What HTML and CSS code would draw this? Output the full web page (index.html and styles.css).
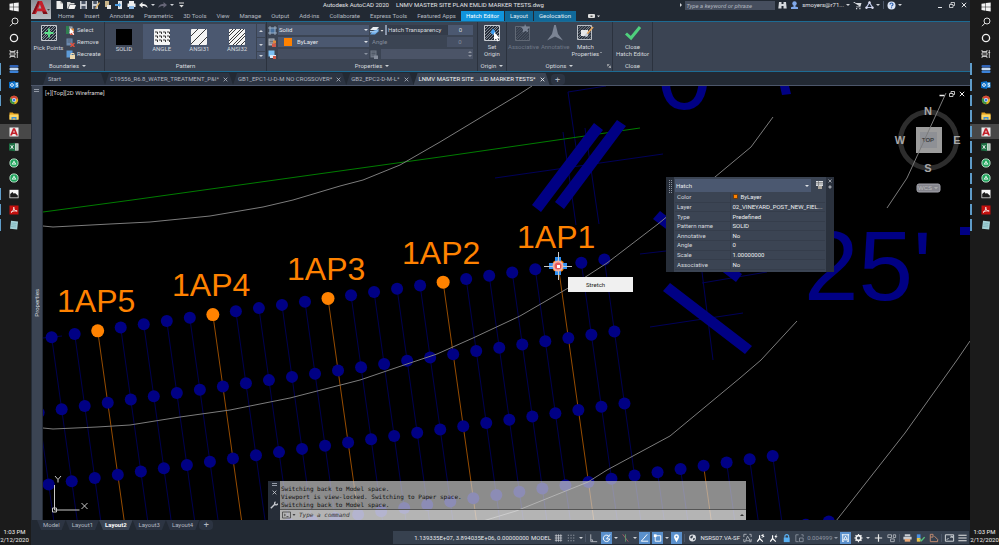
FILE: index.html
```
<!DOCTYPE html>
<html lang="en">
<head>
<meta charset="utf-8">
<title>Autodesk AutoCAD 2020 - LNMV MASTER SITE PLAN EMLID MARKER TESTS.dwg</title>
<link rel="stylesheet" href="styles.css">
</head>
<body>
<svg class="sprite" aria-hidden="true">
  <symbol id="t-win" viewBox="0 0 10 10"><path fill="#f2f2f2" d="M.5 1.8 4.4 1.2v3.5H.5zM4.9 1.1 9.7.4v4.3H4.9zM.5 5.2h3.9v3.5L.5 8.1zM4.9 5.2h4.8v4.3l-4.8-.7z"/></symbol>
  <symbol id="t-search" viewBox="0 0 10 10"><g fill="none" stroke="#e0e0e0"><circle cx="6" cy="4" r="3"/><path d="M3.9 6.2 1 9.2"/></g></symbol>
  <symbol id="t-cortana" viewBox="0 0 10 10"><circle cx="5" cy="5" r="3.6" fill="none" stroke="#f0f0f0" stroke-width="1.3"/></symbol>
  <symbol id="t-tasks" viewBox="0 0 10 10"><path fill="none" stroke="#d8d8d8" stroke-width=".9" d="M1 1v1.5h5V1M1 9V7.5h5V9M1 3.8h5v2.4H1zM8.3 1v8M7.4 3.5h1.8"/></symbol>
  <symbol id="t-stack" viewBox="0 0 10 10"><rect x=".5" y="1" width="9" height="2.4" rx="1" fill="#2f62b5"/><rect x=".5" y="3.8" width="9" height="2.4" rx="1" fill="#c9dcf2"/><rect x=".5" y="6.6" width="9" height="2.4" rx="1" fill="#3b82d8"/></symbol>
  <symbol id="t-outlook" viewBox="0 0 10 10"><path fill="#0a6cc4" d="M0 2 6 1v8L0 8z"/><path fill="#2a90e0" d="M5.5 2.2h4v5.6h-4z"/><circle cx="3" cy="5" r="1.4" fill="none" stroke="#fff" stroke-width=".9"/><path d="M9 3.4H7.2v1.4h1.4v1.5H6.8" fill="none" stroke="#fff" stroke-width=".8"/></symbol>
  <symbol id="t-chrome" viewBox="0 0 10 10"><circle cx="5" cy="5" r="4.2" fill="#e0b021"/><path fill="#d8473a" d="M5 5 1.3 3A4.2 4.2 0 0 1 9 3.7z"/><path fill="#35964a" d="M5 5 5.5 9.1A4.2 4.2 0 0 1 1.3 3z"/><circle cx="5" cy="5" r="2" fill="#fff"/><circle cx="5" cy="5" r="1.5" fill="#3f7de0"/></symbol>
  <symbol id="t-folder" viewBox="0 0 10 10"><path fill="#e8a51f" d="M.5 1.5h3.3l1 1h4.7v6h-9z"/><path fill="#fbd768" d="M.5 3.6h9v5h-9z"/><path fill="#3f8fd6" d="M2.5 6h5v2.9H6.3V7.4H3.7v1.5H2.5z"/></symbol>
  <symbol id="t-acad" viewBox="0 0 10 10"><path fill="#ececec" d="M.5.5h9v9h-9z"/><path fill="#c2202a" d="M4 1.2h2L9 8.6H7L6.4 7H3.6L3 8.6H1zM5 3.2 4.1 5.6h1.8z"/></symbol>
  <symbol id="t-excel" viewBox="0 0 10 10"><path fill="#e8efe9" d="M5 1.4h4.5v7.2H5z"/><path fill="#1e7044" d="M0 1.6 6 .8v8.4l-6-.8z"/><path stroke="#fff" stroke-width=".9" d="m1.7 3.2 2.6 3.6M4.3 3.2 1.7 6.8"/><path stroke="#1e7044" stroke-width=".7" d="M6.5 3h2.3M6.5 5h2.3M6.5 7h2.3"/></symbol>
  <symbol id="t-green" viewBox="0 0 10 10"><circle cx="5" cy="5" r="4.1" fill="#1fa45c" stroke="#c7ecd6" stroke-width=".9"/><path fill="#fff" d="M5 2.4 7.4 6.6H2.6z"/><path fill="#1fa45c" d="M5 4.1 5.9 5.8H4.1z"/></symbol>
  <symbol id="t-photo" viewBox="0 0 10 10"><path fill="#f4f4f4" d="M.5.8h9v8.4h-9z"/><path fill="#1a1a1a" d="M1.2 8.4V5L3.4 3l1.4 1.7L6 3.9l2.8 2.6v1.9z"/></symbol>
  <symbol id="t-pdf" viewBox="0 0 10 10"><path fill="#c4100e" d="M.5.5h9v9h-9z"/><path fill="none" stroke="#fff" stroke-width=".8" d="M2 7.4C4 6.4 5 4 4.8 2.2 4.700 4.800 6 6 8.200 6 6 5.600 3.600 6 2 7.400"/></symbol>
  <symbol id="t-note" viewBox="0 0 10 10"><path fill="#a8d4da" d="m2 .8 7 .6-.8 8L1 8.700z"/><path stroke="#5c9aa3" stroke-width=".5" d="m2.500 3 5 .4M2.300 4.800l5 .4M2.100 6.600l5 .4"/></symbol>
  <symbol id="hatch" viewBox="0 0 16 16"><path fill="#252c37" stroke="#c8ccd2" d="M.5.5h15v15H.5z"/><path fill="none" stroke="#9aa3b0" stroke-width=".8" d="M1 4 4 1M1 7l6-6M1 10l9-9M1 13l12-12M1 15 15 1M4 15 15 4M7 15l8-8M10 15l5-5M13 15l2-2"/></symbol>
  <symbol id="layer" viewBox="0 0 9 9"><path fill="#aeb5bf" d="M.5.5h6v7h-6z"/><path stroke="#3b4453" stroke-width=".6" d="M1.500 2h4M1.500 3.500h4M1.500 5h4"/><path fill="#e08a3c" d="M5 2.500h3v3H5z"/><path fill="#cf5a4a" d="M4 5.500h4V9H4z"/></symbol>
  <symbol id="x" viewBox="0 0 6 6"><path stroke="currentColor" d="m.8.8 4.400 4.400M5.200.8.8 5.200"/></symbol>
  <symbol id="restore" viewBox="0 0 6 6"><path fill="none" stroke="currentColor" stroke-width=".8" d="M.5 2.500h3.500v3H.5zM2 2.300V.5h3.500v3H4.200"/></symbol>
</svg>

<nav class="taskbar" aria-label="Left taskbar">
  <ul class="tasks"></ul>
  <p class="clock">1:03 PM<br>2/12/2020</p>
</nav>

<div class="app">
  <header class="top">
    <button class="logo" aria-label="Application menu"><svg viewBox="0 0 20 18"><path fill="#c51f2b" d="M7 0h4l5.500 13h-4.200l-1-2.800H6.200L5 13H1zM8.900 3.200 7.200 7.600h3.200z"/><path fill="#7d0f18" d="M7 0 1 13h2.500L8.500 1zM11.300 10.200l1 2.800h4.200l-1-2.300z"/><path d="M16 8h3l-1.500 1.700z" fill="#444"/></svg></button>
    <div class="heads">
      <div class="title-row">
        <div class="qat">
          <svg viewBox="0 0 9 9"><path fill="#eee" d="M1.500 0h4l2.500 2.500V8h-6.500z"/><path fill="#999" d="M5.500 0v2.500H8z"/></svg>
          <svg viewBox="0 0 9 9"><path fill="#d9d9d9" d="M0 1h3l1 1h3.500v1.500H2.500L1 7.500H0z"/><path fill="#f4f4f4" d="M2.700 4H9L7.500 8H1.300z"/></svg>
          <svg viewBox="0 0 9 9"><path fill="#c8ccd2" d="M1 0h7v8H1z"/><path fill="#4b5566" d="M2.500 0h4v3h-4zM2.500 5h4v3h-4z"/></svg>
          <svg viewBox="0 0 9 9"><path fill="#c8ccd2" d="M1 0h6v8H1z"/><path fill="#4b5566" d="M2.300 0h3.500v3H2.300zM2.300 5h3v3h-3z"/><path stroke="#e0b060" stroke-width="1.300" d="M8.500 1.500 4.500 7.500"/></svg>
          <svg viewBox="0 0 9 9"><path fill="#c8b489" d="M2 0h4v6H2z"/><path fill="#e8e8e8" d="M4 4h4v4H4z"/></svg>
          <svg viewBox="0 0 9 9"><path fill="#dfe3e8" d="M3 0h4v8H3z"/><path fill="#4b9be0" d="M0 3h4V1.500L6 4 4 6.500V5H0z"/></svg>
          <svg viewBox="0 0 9 9"><path fill="#eee" d="M2 0h5v2.500H2zM.5 2.500h8V6h-8z"/><path fill="#8dbbe8" d="M2 5h5v3H2z"/></svg>
          <svg viewBox="0 0 9 9"><path fill="#eee" d="M0 4 3.500 1v2C6.500 3 8.500 4 8.500 7 7.500 5.500 6 5 3.500 5v2z"/></svg>
          <i class="caret"></i>
          <svg viewBox="0 0 9 9"><path fill="#667" d="M9 4 5.500 1v2C2.500 3 .5 4 .5 7 1.500 5.500 3 5 5.500 5v2z"/></svg>
          <i class="caret"></i>
          <svg viewBox="0 0 9 9"><path fill="#ddd" d="M2 1.500h5v1H2zM2.200 4h4.600L4.500 6.500z"/></svg>
        </div>
        <h1 class="title"><span>Autodesk AutoCAD 2020</span><span>LNMV MASTER SITE PLAN EMLID MARKER TESTS.dwg</span></h1>
        <div class="account">
          <i class="caret right"></i>
          <input class="search" type="search" placeholder="Type a keyword or phrase" aria-label="Type a keyword or phrase">
          <svg viewBox="0 0 9 9"><path fill="#d5d8dd" d="M1 1h2.500v2h2V1H8l.7 6.500H5.500V5h-2v2.500H.3z"/></svg>
          <svg viewBox="0 0 9 9"><circle cx="4.500" cy="2.500" r="2.200" fill="#7fa8ea"/><path fill="#7fa8ea" d="M3.700 4h1.600v1.500L8 6.200V8H1V6.200l2.700-.7z"/></svg>
          <button class="user">smoyers@r71...</button><i class="caret"></i>
          <svg class="cart" viewBox="0 0 9 9"><path fill="#d5d8dd" d="M0 1h2l.5 1H8.500L7.500 5.500H3.200v.7H8M3 7h1.200v1.200H3zM6.300 7h1.200v1.200H6.300z"/></svg>
          <svg viewBox="0 0 9 9"><path fill="none" stroke="#b9c4e6" stroke-width="1.200" d="M4.500 1.500 7.500 6.500h-6z"/><circle cx="4.500" cy="1.500" r="1.200" fill="#dde"/><circle cx="1.500" cy="6.800" r="1.200" fill="#dde"/><circle cx="7.500" cy="6.800" r="1.200" fill="#dde"/></svg>
          <i class="caret"></i><i class="bar"></i>
          <svg viewBox="0 0 9 9"><circle cx="4.500" cy="4.500" r="4" fill="#dce6f6"/><path fill="none" stroke="#2c5fb0" stroke-width="1.200" d="M3 3.500c0-2 3-2 3 0 0 1-1.500 1-1.500 2M4.500 6.300v1"/></svg>
          <i class="caret"></i>
        </div>
        <div class="winctl">
          <button aria-label="Minimize"><svg viewBox="0 0 6 6"><path stroke="currentColor" d="M1 5.500h4"/></svg></button>
          <button aria-label="Restore"><svg><use href="#restore"/></svg></button>
          <button aria-label="Close"><svg><use href="#x"/></svg></button>
        </div>
      </div>
      <nav class="tabs">
        <a href="#">Home</a><a href="#">Insert</a><a href="#">Annotate</a><a href="#">Parametric</a><a href="#">3D Tools</a><a href="#">View</a><a href="#">Manage</a><a href="#">Output</a><a href="#">Add-ins</a><a href="#">Collaborate</a><a href="#">Express Tools</a><a href="#">Featured Apps</a><a class="ctx on" href="#">Hatch Editor</a><a class="ctx" href="#">Layout</a><a class="ctx" href="#">Geolocation</a>
        <svg viewBox="0 0 12 6"><rect y="1" width="7" height="4" rx="1" fill="#ddd"/><path fill="#555" d="M2.500 2.500h2v1.500h-2z"/><path fill="#ddd" d="M9 2.500h3L10.500 4.200z"/></svg>
      </nav>
    </div>
  </header>

  <section class="ribbon" aria-label="Hatch Editor">
    <div class="panel p-bound">
      <div class="body">
        <button class="big"><svg viewBox="0 0 18 18"><use href="#hatch" x="1" y="1" width="16" height="16"/><path stroke="#5de08a" stroke-width="1.800" d="M9 4.500v9M4.500 9h9"/></svg>Pick Points</button>
        <div class="stack">
          <button><svg viewBox="0 0 9 9"><use href="#layer" width="9" height="9"/><path fill="#2f7f50" d="M0 0h3v8H0z"/><path fill="#fff" d="M4 2v6l1.500-1.300L7.500 9l.8-.8L6.500 6H8z"/></svg>Select</button>
          <button><svg viewBox="0 0 9 9"><path fill="#6d8bb0" d="M.5.5h6v7h-6z"/><path stroke="#3b4453" stroke-width=".6" d="M1.500 2h4M1.500 4h4"/><path stroke="#e0503c" stroke-width="1.400" d="m4.500 5 4 4M8.500 5l-4 4"/></svg>Remove</button>
          <button><svg viewBox="0 0 9 9"><path fill="#5d9bd8" d="M.5.500h6v7h-6z"/><path fill="#ecd9ae" d="M4 5h5v4H4z"/><path fill="none" stroke="#ecd9ae" d="M5 5V3.500h3V5"/></svg>Recreate</button>
        </div>
      </div>
      <h2>Boundaries<i class="caret"></i></h2>
    </div>
    <div class="panel p-pattern">
      <div class="body gallery">
        <button class="on"><svg viewBox="0 0 16 16"><path d="M0 0h16v16H0z"/></svg>SOLID</button>
        <button><svg viewBox="0 0 16 16"><rect width="16" height="16" rx="1" fill="#f4f4f4"/><path fill="none" stroke="#222" stroke-width=".9" d="M1 3h2.500v2M5 3h2.500v2M9 3h2.500v2M13 3h2.500v2M1 7h2.500v2M5 7h2.500v2M9 7h2.500v2M13 7h2.500v2M1 11h2.500v2M5 11h2.500v2M9 11h2.500v2M13 11h2.500v2"/></svg>ANGLE</button>
        <button><svg viewBox="0 0 16 16"><rect width="16" height="16" rx="1" fill="#f4f4f4"/><path stroke="#222" stroke-width=".9" d="M0 7 7 0M0 15 15 0M8 16l8-8"/></svg>ANSI31</button>
        <button><svg viewBox="0 0 16 16"><rect width="16" height="16" rx="1" fill="#f4f4f4"/><path stroke="#222" stroke-width=".9" d="M0 4 4 0M0 7 7 0M0 12 12 0M0 15 15 0M4 16 16 4M7 16l9-9M12 16l4-4"/></svg>ANSI32</button>
        <div class="scroller"><button aria-label="Up"><i class="caret up"></i></button><button aria-label="Down"><i class="caret"></i></button><button aria-label="More"><i class="caret"></i></button></div>
      </div>
      <h2>Pattern</h2>
    </div>
    <div class="panel p-props">
      <div class="body props">
        <svg viewBox="0 0 9 9"><path fill="#48709c" d="M1.500 1.500h6v6h-6z"/><path fill="none" stroke="#a9bacd" stroke-width=".8" d="M0 2h9M0 7h9M2 0v9M7 0v9"/></svg>
        <label class="sel"><select aria-label="Hatch type"><option>Solid</option></select></label>
        <svg class="wide" viewBox="0 0 14 9"><path fill="#6aaae8" d="m3 5 4-2 2 2-4 3.500H0z"/><path fill="#e8edf2" d="m3 1 6 0-2.500 3H0z"/><path fill="#9fc7ec" d="M0 5h6l2.500-2.500V4L6 6.500H0z"/><path fill="#ddd" d="M10.500 4h3L12 5.700z"/></svg>
        <div class="field lit"><label for="transp">Hatch Transparency</label><input id="transp" value="0"></div>
        <svg><use href="#layer"/></svg>
        <label class="sel sw"><select aria-label="Hatch color"><option>ByLayer</option></select></label>
        <div class="field angle"><label for="angle">Angle</label><input id="angle" value="0" disabled></div>
        <svg viewBox="0 0 9 9"><path fill="#7cc0f4" d="M.5.500h6v6h-6z"/><path fill="#d8e8f8" d="M2 5h6v3H2z"/><path fill="#cf5a4a" d="M5 6h3v3H5z"/></svg>
        <label class="sel off"><select aria-label="Background color" disabled><option></option></select></label>
        <svg viewBox="0 0 9 9"><path fill="#707887" d="M.5.500h6v7h-6z"/><path stroke="#3b4453" stroke-width=".6" d="M1.500 2h4M1.500 3.500h4M1.500 5h4"/><path fill="#858d9b" d="M4 5.500h4V9H4z"/></svg>
        <div class="field spin"><input aria-label="Scale" disabled><div class="arrows"><i class="caret up"></i><i class="caret"></i></div></div>
      </div>
      <h2>Properties<i class="caret"></i></h2>
    </div>
    <div class="panel p-origin">
      <div class="body"><button class="big"><svg viewBox="0 0 18 18"><use href="#hatch" x="1" y="1" width="16" height="16"/><path fill="#3d9df0" d="M10 4.500 12.500 8 10 11 7.500 8z"/><path fill="#fff" d="M11 8v8.500l2-1.700 1.500 2.700 1.300-.8-1.400-2.500 2.400-.3z"/></svg>Set<br>Origin</button></div>
      <h2>Origin<i class="caret"></i></h2>
    </div>
    <div class="panel p-opts">
      <div class="body">
        <button class="big" disabled><svg viewBox="0 0 18 18"><use href="#hatch" x="1" y="2" width="15" height="15" opacity=".3"/><path fill="#7b8494" d="m11 0 1.500 3 3.500 0-2.500 2.500 1 3-3-1.500-3 1.500.6-3.300L7 3l3.200-.2z"/></svg>Associative</button>
        <button class="big" disabled><svg viewBox="0 0 18 18"><path fill="#7b8494" d="M8.200 1h1.600L12 10l5 6.500-8-4-8 4L6 10z"/></svg>Annotative</button>
        <button class="big match"><svg viewBox="0 0 18 18"><use href="#hatch" x="1" y="1" width="15" height="15"/><path fill="#e8e8e8" d="M5 6h7v6H5z"/><path stroke="#e3a661" stroke-width="1.800" d="m17 3-6 7"/><path fill="#c7cdd6" d="m8 12 2.500-3 2 1.500L11 13z"/></svg>Match<br>Properties</button><i class="caret"></i>
      </div>
      <h2>Options<i class="caret"></i><svg class="launch" viewBox="0 0 5 5"><path fill="none" stroke="#ccc" stroke-width=".8" d="M.5 3V.5H3M1.500 1.500l3 3M4.500 2v2.500H2"/></svg></h2>
    </div>
    <div class="panel p-close">
      <div class="body"><button class="big"><svg viewBox="0 0 18 18"><path fill="none" stroke="#4fd07d" stroke-width="3" d="m2 9.500 5 4.500 9-11"/></svg>Close<br>Hatch Editor</button></div>
      <h2>Close</h2>
    </div>
  </section>

  <nav class="docs">
    <a href="#" class="start">Start</a>
    <a href="#">C19556_R6.8_WATER_TREATMENT_P&amp;I*<svg><use href="#x"/></svg></a>
    <a href="#">GB1_EPC1-U-D-M NO CROSSOVER*<svg><use href="#x"/></svg></a>
    <a href="#">GB2_EPC2-D-M-L*<svg><use href="#x"/></svg></a>
    <a href="#" class="on">LNMV MASTER SITE ...LID MARKER TESTS*<svg><use href="#x"/></svg></a>
    <button class="plus" aria-label="New tab">+</button>
  </nav>

  <main class="work">
    <aside class="side"><i class="grip"></i><span>Properties</span></aside>
    <div class="canvas">
      <svg class="drawing" viewBox="43 86 927 434" preserveAspectRatio="xMinYMin slice" role="img" aria-label="Vineyard site plan">
        <g class="thin">
          <path d="M606 86 568 92 576 147M563 132 576 225M585 128 599 224M495 178 663 154M702 272 713 360M650 327 743 313M702 283 767 272M640 254 666 251M43 338 62 336"/>
        </g>
        <g id="posts"></g>
        <path class="green" d="M43 212 132 200 440 157 640 128"/>
        <g class="bars">
          <path d="M594 123 603 130 541 212 532 205zM617 120 626 126 564 209 555 202zM663 291 670 283 752 346 745 354zM653 219 660 211 742 274 736 282zM780 86H789L791 94 782 95zM960 227h10v8h-10z"/>
          <text x="657" y="109">0</text><text x="804" y="300">25'</text>
        </g>
        <g class="contour">
          <path d="M43 226 53 227 110 224 150 222 210 216 263 207 293 200 340 186 363 180 400 165 440 142 518 95 532 86"/>
          <path d="M43 428 53 429 97 427 130 425 180 417 230 410 290 398 360 380 407 364 437 354 473 338 520 316 570 287 607 263 658 224 715 177 751 147 773 117"/>
          <path d="M483 521 516 511 588 482 607 470 670 436 740 378 761 360 797 321"/>
          <path d="M970 341 957 360 905 433 876 470 836 521"/>
        </g>
        <g class="labels">
          <text x="57" y="312">1AP5</text><text x="172" y="296">1AP4</text><text x="287" y="280">1AP3</text><text x="402" y="264">1AP2</text><text x="517" y="248">1AP1</text>
        </g>
        <g class="cursor"><path fill="#2f8ff0" d="M555 257h6v6h6v6h-6v6h-6v-6h-6v-6h6z"/><circle cx="558" cy="266" r="4.500" fill="#e85a5a" stroke="#f3b0a0" stroke-width="2"/><path stroke="#c9c9c9" d="M558.500 252v9M558.500 271v9M544 266.500h9M563 266.500h9"/><path fill="#fff" d="M557 265h3v3h-3z"/></g>
        <g class="ucs" fill="none" stroke="#c8c8c8"><path d="M54.500 485v25h25M52.500 508h4v4h-4zM81.500 503l6 6M87.500 503l-6 6M55 476l3 3.500 3-3.500M58 479.500v3"/></g>
        <circle cx="928.500" cy="140" r="28" fill="none" stroke="#2d2d2d" stroke-width="5"/>
        <path fill="#9c9c9c" d="M916 127h26v26h-26z"/><path fill="#8e9095" d="M920 132h17v16h-17z"/>
        <g class="rose"><text x="928" y="115">N</text><text x="900" y="144">W</text><text x="957" y="144">E</text><text x="928" y="172">S</text><text class="topface" x="928" y="142">TOP</text></g>
        <rect x="917" y="184" width="23" height="8" rx="2" fill="#85858d" stroke="#a5a5ad"/><text class="wcs" x="918" y="190">WCS</text><path d="M934 187h4l-2 2.500z" fill="#aaa"/>
        <path class="contour" d="M946 93 907 178 887 208"/>
      </svg>
      <span class="viewlabel">[+][Top][2D Wireframe]</span>
      <div class="vpctl"><button aria-label="Minimize viewport"><svg viewBox="0 0 6 6"><path stroke="currentColor" stroke-width="1.500" d="M.5 4.500h5"/></svg></button><button aria-label="Restore viewport"><svg><use href="#restore"/></svg></button><button aria-label="Close viewport"><svg><use href="#x"/></svg></button></div>

      <div class="tip">Stretch</div>

      <section class="palette" aria-label="Quick properties">
        <i class="dots"></i>
        <div class="pmain">
          <div class="phead"><label class="sel"><select aria-label="Object type"><option>Hatch</option></select></label><svg viewBox="0 0 9 9"><path fill="#d9dce0" d="M1 0h7v5H1z"/><path stroke="#666" stroke-width=".6" d="M1 1.500h7M1 3h7M3.500 0v5"/><path fill="#aaa49a" d="M3 5h4v3H3z"/></svg></div>
          <table>
            <tr><th scope="row">Color</th><td><i class="chip"></i>ByLayer</td></tr>
            <tr><th scope="row">Layer</th><td>02_VINEYARD_POST_NEW_FIEL...</td></tr>
            <tr><th scope="row">Type</th><td>Predefined</td></tr>
            <tr><th scope="row">Pattern name</th><td>SOLID</td></tr>
            <tr><th scope="row">Annotative</th><td>No</td></tr>
            <tr><th scope="row">Angle</th><td>0</td></tr>
            <tr><th scope="row">Scale</th><td>1.00000000</td></tr>
            <tr><th scope="row">Associative</th><td>No</td></tr>
          </table>
        </div>
        <div class="pside"><button aria-label="Close palette"><svg><use href="#x"/></svg></button><button aria-label="Palette options"><svg viewBox="0 0 6 6"><circle cx="3" cy="3" r="1.600" fill="none" stroke="currentColor" stroke-width="1.300"/></svg></button></div>
      </section>

      <section class="cmd" aria-label="Command window">
        <div class="cmdside"><i class="grip"></i><svg><use href="#x"/></svg><svg class="wrench" viewBox="0 0 8 8"><path stroke="currentColor" stroke-width="1.400" d="m.8 7.200 4-4"/><path fill="none" stroke="currentColor" stroke-width="1.300" d="M5.500.8c-1.500 1-1 3.200.8 3 .7 0 1.200-.7 1.300-1.300"/></svg></div>
        <div class="cmdmain">
          <p>Switching back to Model space.<br>Viewport is view-locked. Switching to Paper space.<br>Switching back to Model space.</p>
          <div class="entry"><svg viewBox="0 0 14 8"><path fill="none" stroke="#444" stroke-width=".8" d="M.5 1h8v6h-8zM2 3l1.500 1L2 5M4.500 5.500h2"/><path fill="#444" d="M10.500 3h3L12 5z"/></svg><input placeholder="Type a command" aria-label="Type a command"><i class="caret up dark"></i></div>
        </div>
      </section>
    </div>
  </main>

  <nav class="layouts"><a href="#">Model</a><a href="#">Layout1</a><a class="on" href="#">Layout2</a><a href="#">Layout3</a><a href="#">Layout4</a><button aria-label="New layout">+</button></nav>

  <footer class="status">
    <div class="tray">
      <span class="coords">1.139335E+07, 3.894035E+06, 0.00000000</span><span class="model">MODEL</span>
      <svg viewBox="0 0 12 10"><path stroke="#d0d3d8" stroke-width=".8" d="M3.500 1v8M6 1v8M8.500 1v8M2 2.500h8M2 5h8M2 7.500h8"/></svg>
      <svg viewBox="0 0 12 10"><path stroke="#c0c4ca" stroke-dasharray="1 2" d="M2 2h8M2 5h8M2 8h8"/></svg>
      <i class="caret"></i><i class="bar"></i>
      <svg viewBox="0 0 12 10"><path fill="none" stroke="#c0c4ca" stroke-width=".9" d="M3 1v8h7M5 9V7H3"/></svg>
      <svg class="hot" viewBox="0 0 12 10"><path fill="none" stroke="#fff" d="M9 3.500A3.500 3.500 0 1 0 9.500 6H6l4-5"/></svg>
      <i class="caret"></i>
      <svg viewBox="0 0 12 10"><path stroke="#b5626a" stroke-width=".9" d="M3 1l6 8"/><path stroke="#5fa070" stroke-width=".9" d="M6 1v8"/></svg>
      <i class="caret"></i>
      <svg class="hot" viewBox="0 0 12 10"><path fill="none" stroke="#fff" d="M9 1 2.500 8.500H10"/></svg>
      <svg class="hot" viewBox="0 0 12 10"><path fill="none" stroke="#fff" d="M3.500 2.500h6v6h-6z"/><path fill="#fff" d="M2 1h3v3H2z"/></svg>
      <i class="caret"></i>
      <svg class="hot" viewBox="0 0 12 10"><path fill="#fff" d="M6 9.500C4 6.500 3.300 5 3.300 3.700a2.700 2.700 0 0 1 5.400 0C8.700 5 8 6.500 6 9.500z"/><circle cx="6" cy="3.600" r="1" fill="#5a90cc"/></svg>
      <i class="bar"></i>
      <svg viewBox="0 0 12 10"><circle cx="6" cy="5" r="3.800" fill="#dde0e4"/><path fill="#37414f" d="M4 3l2-1 .5 2L5 5.500 3.500 5zM7 5l2 .5-1.500 2L6.500 7z"/></svg>
      <span class="crs">NSRS07.VA-SF</span>
      <svg viewBox="0 0 12 10"><path fill="none" stroke="#b9bdc4" stroke-width=".9" d="M2 4V1h3M8 1h2v3M2 6v3h2M10 6v3H8M4 8l2-5 3 5z"/></svg>
      <svg viewBox="0 0 12 10"><path fill="none" stroke="#fff" stroke-width="1.300" d="M2.500 9 5 5.500V2M5 5.500 8.500 9M7 2l3 1.500M9 1 7.500 4.500"/></svg>
      <svg viewBox="0 0 12 10"><path fill="none" stroke="#fff" stroke-width="1.300" d="M2.500 9 5 5.500V2M5 5.500 8.500 9"/><path fill="#fff" d="M9.500.500 7 4h1.500L7.500 6l3-3H9z"/></svg>
      <svg viewBox="0 0 12 10"><path fill="#59b0f2" d="M3 4.500h6.500v5H3z"/><path fill="none" stroke="#59b0f2" stroke-width="1.200" d="M4.300 5V2.500q2-2.300 4 0V5"/></svg>
      <svg viewBox="0 0 12 10"><path fill="none" stroke="#8f97a3" stroke-width=".9" d="M2 1.500h3M2 1.500V9h3M6 5h4v4H6zM8 1.500h2v2"/></svg>
      <span class="scale">0.004999</span><i class="caret dimc"></i>
      <svg class="hot" viewBox="0 0 12 10"><path fill="none" stroke="#fff" d="M2 1.500h8M2.500 8.500h2M7.500 8.500h2M3 1v8M9 1v8M4 7l2-4 2 4z"/></svg>
      <svg viewBox="0 0 12 10"><circle cx="6" cy="5" r="2.600" fill="none" stroke="#f2f2f2" stroke-width="1.800"/><path stroke="#f2f2f2" stroke-width="1.300" d="M6 .5v1.500M6 8v1.500M1.500 5H3M9 5h1.500M2.800 1.800l1 1M8.200 7.200l1 1M9.200 1.800l-1 1M2.800 8.200l1-1"/></svg>
      <i class="caret"></i>
      <svg viewBox="0 0 12 10"><path stroke="#e8e8e8" stroke-width="1.300" d="M6 1v8M2 5h8"/></svg>
      <svg viewBox="0 0 12 10"><path fill="none" stroke="#b9bdc4" stroke-width=".9" d="M2 1.500h4v3H2zM8 1.500h2.500v3H8zM5 6h4v3H5z"/></svg>
      <i class="bar"></i>
      <svg viewBox="0 0 12 10"><path fill="#c9cdd3" d="M3 1h6v2H3zM1.500 3.500h9v3h-9z"/><path fill="#e9a877" d="M3 6h6v3H3z"/></svg>
      <svg viewBox="0 0 12 10"><path fill="#e6c050" d="M2 5h4v4H2z"/><path fill="#4a8fe0" d="M2 1h4v4H2z"/><path fill="none" stroke="#58c080" stroke-width="1.500" d="m5 6 2 2 3.500-4"/></svg>
      <svg viewBox="0 0 12 10"><path fill="none" stroke="#c98f72" d="M2.500 1h3v3h-3zM2.500 4v5h8V6.500L7 3"/></svg>
      <i class="bar"></i>
      <svg viewBox="0 0 12 10"><path fill="none" stroke="#dcdfe3" d="M1.500 1.500h9v7h-9zM3 7l2-2M9 3 7 5M7 3h2v2"/></svg>
      <svg viewBox="0 0 12 10"><path stroke="#e8e8e8" stroke-width="1.300" d="M1.500 2h9M1.500 5h9M1.500 8h9"/></svg>
    </div>
  </footer>
</div>

<nav class="taskbar end" aria-label="Right taskbar">
  <ul class="tasks"></ul>
  <p class="clock">1:03 PM<br>2/12/2020</p>
</nav>
<script src="plan.js"></script>
</body>
</html>
```
FILE: styles.css
```
* { box-sizing: border-box; }
body {
  margin: 0;
  display: grid;
  grid-template-columns: 31px minmax(0, 1fr) 29px;
  height: 100vh;
  overflow: hidden;
  background: #1c1c1c;
  color: #d6d9de;
  font: 6px/8px Roboto, "Noto Sans", sans-serif;
}
button, input, select { font: inherit; color: inherit; background: none; border: 0; padding: 0; margin: 0; min-width: 0; }
a { color: inherit; text-decoration: none; }
svg { display: block; flex: none; }
h1, h2, p, ul { margin: 0; padding: 0; font: inherit; list-style: none; }
.sprite { position: absolute; width: 0; height: 0; }
.caret { flex: none; width: 0; height: 0; border: 2px solid transparent; border-top-color: #d0d3d8; border-bottom: 0; }
.caret.up { border-top: 0; border-bottom: 2px solid #d0d3d8; }
.caret.right { border: 2px solid transparent; border-left-color: #d0d3d8; border-right: 0; }
.caret.dark { border-bottom-color: #333; }
.caret.dimc { border-top-color: #8f97a3; }
.bar { flex: none; width: 1px; height: 8px; background: #4b5566; }

/* taskbars */
.taskbar { display: flex; flex-direction: column; justify-content: space-between; background: #1b1b1b; overflow: hidden; }
.tasks { display: grid; grid-auto-rows: 1fr; height: 234px; margin-top: -1px; }
.tasks li { display: grid; place-items: center; padding-right: 3px; position: relative; }
.tasks svg { width: 10px; height: 10px; }
.tasks .run::before { content: ""; position: absolute; left: 0; top: 2px; bottom: 2px; width: 1px; background: #5f9cc9; }
.tasks .active { background: #484848; }
.end .tasks li { padding: 0 0 0 3px; }
.end .tasks .run::before { width: 2px; }
.clock { color: #f0f0f0; text-align: center; padding: 0 2px 1px 0; white-space: nowrap; }
.end .clock { padding-right: 0; }

/* application frame */
.app { display: grid; grid-template-rows: auto auto auto minmax(0, 1fr) auto auto; min-width: 0; background: #222933; }
.top { display: flex; height: 21px; }
.logo { width: 20px; height: 19px; background: linear-gradient(#8a8f96, #b8bcc2); }
.logo svg { width: 20px; height: 18px; }
.heads { flex: 1; min-width: 0; }
.title-row { display: flex; align-items: center; height: 10px; color: #e2e4e8; }
.title-row svg { width: 9px; height: 9px; }
.qat { display: flex; align-items: center; gap: 3px; padding-left: 4px; width: 272px; }
.title { display: flex; gap: 7px; white-space: nowrap; flex: 1; }
.account { display: flex; align-items: center; gap: 3px; margin-right: 35px; }
.account .caret { margin-left: -1px; }
.search { width: 90px; height: 9px; background: #464e5e; padding: 0 1px; font-style: italic; appearance: none; }
.search::placeholder { color: #b0b5be; opacity: 1; }
.winctl { display: flex; gap: 6px; padding-right: 3px; }
.winctl svg, .vpctl svg { width: 6px; height: 6px; }
.tabs { display: flex; align-items: center; height: 11px; color: #b4b9c1; padding-left: 2px; }
.tabs a { padding: 0 5px; line-height: 10px; }
.tabs .ctx { background: #10699a; color: #e4eef5; margin-right: 1px; }
.tabs .on { background: #1094dc; color: #fff; }
.tabs svg { width: 12px; height: 6px; margin-left: 11px; }

/* ribbon */
.ribbon { display: flex; height: 51px; background: #3b4453; border-top: 1px solid #1d6b93; border-bottom: 1px solid #1d6b93; }
.panel { display: flex; flex-direction: column; border-right: 1px solid #2b323e; }
.panel .body { flex: 1; display: flex; padding-top: 2px; }
.panel h2 { display: flex; justify-content: center; align-items: center; gap: 3px; height: 10px; position: relative; }
.p-bound { width: 74px; }
.p-pattern { width: 162px; }
.p-props { width: 211px; }
.p-origin { width: 29px; }
.p-opts { width: 106px; }
.p-close { width: 40px; }
.big { display: flex; flex-direction: column; align-items: center; gap: 1px; white-space: nowrap; line-height: 7px; }
.big svg { width: 18px; height: 18px; }
.big:disabled { color: #707887; }
.p-bound .big { width: 35px; gap: 2px; }
.stack { display: flex; flex-direction: column; justify-content: space-around; height: 36px; }
.stack button { display: flex; align-items: center; gap: 2px; }
.stack svg { width: 9px; height: 9px; }
.p-pattern .gallery { padding: 2px 1px 2px 0; }
.gallery > button { width: 38px; background: #4b5870; display: flex; flex-direction: column; align-items: center; padding-top: 5px; }
.gallery > .on { background: #3f4859; }
.gallery svg { width: 16px; height: 16px; }
.scroller { display: grid; grid-template-rows: 13px 13px 1fr; gap: 1px; width: 8px; margin-left: 1px; }
.scroller button { background: #4b5870; display: grid; place-items: center; }
.panel .props { display: grid; grid-template-columns: 9px 91px 14px 88px; grid-auto-rows: 10px; gap: 2px 1px; padding: 3px 1px 0; align-items: center; }
.props svg { width: 9px; height: 9px; }
.props .wide { width: 14px; }
.sel { position: relative; display: flex; align-items: center; height: 10px; background: #4b5870; }
.sel select { appearance: none; width: 100%; height: 100%; padding-left: 1px; color: #e6e8ec; opacity: 1; }
.sel::after { content: ""; position: absolute; right: 1px; top: 4px; border: 2px solid transparent; border-top-color: #e0e2e6; border-bottom: 0; pointer-events: none; }
.sel.sw::before { content: ""; width: 8px; height: 8px; background: #ff8200; margin-left: 6px; flex: none; }
.sel.sw select { padding-left: 5px; }
.sel.off { background: #454e60; }
.sel.off::after { border-top-color: #8a92a0; }
.field { display: flex; height: 10px; line-height: 10px; }
.field label { flex: 1; white-space: nowrap; }
.field input { width: 26px; text-align: center; background: #465064; }
.field.lit { background: #343c4a; border-left: 2px solid #8a96ab; }
.field.lit label { padding-left: 1px; }
.field.angle { grid-column: span 2; color: #858d9b; padding-left: 2px; }
.field.lit input { background: #4b5870; border-left: 1px solid #333b48; }
.field.spin { margin-left: -4px; background: #4b5467; }
.field.spin input { flex: 1; background: none; }
.arrows { display: flex; flex-direction: column; justify-content: center; gap: 2px; padding-right: 1px; opacity: .5; }
.p-origin .big { width: 28px; }
.p-opts .body { align-items: flex-start; gap: 2px; padding-left: 1px; }
.p-opts .body .caret { margin: 28px 0 0 -1px; border-width: 1px; border-bottom: 0; }
.launch { width: 4px; height: 4px; position: absolute; right: 1px; bottom: 3px; }
.p-close .big { width: 39px; }

/* document tabs */
.docs { display: flex; align-items: flex-end; height: 14px; padding-left: 12px; border-bottom: 1px solid #4c566a; color: #b2b7c0; }
.docs a { display: flex; align-items: center; gap: 4px; height: 12px; padding: 0 5px; background: #2c3442; clip-path: polygon(4px 0, calc(100% - 4px) 0, 100% 100%, 0 100%); white-space: nowrap; }
.docs .start { width: 62px; }
.docs .on { background: #3b4453; color: #f2f3f5; }
.docs svg { width: 5px; height: 5px; }
.plus { width: 14px; height: 11px; font-size: 9px; background: #2c3442; border-radius: 4px; margin-left: 1px; }

/* work area */
.work { display: flex; min-height: 0; }
.side { width: 12px; flex: none; background: #3b4453; border-left: 1px solid #252c37; border-right: 1px solid #252c37; display: grid; place-items: center; position: relative; }
.side span { writing-mode: vertical-rl; transform: rotate(180deg); line-height: 10px; }
.grip { width: 5px; height: 3px; border-top: 1px solid #949ba7; border-bottom: 1px solid #949ba7; }
.side .grip { position: absolute; top: 3px; left: 2px; }
.canvas { position: relative; flex: 1; min-width: 0; background: #000; overflow: hidden; }
.drawing { width: 100%; height: 100%; }
.thin { fill: none; stroke: #000058; }
.post-line { stroke: #000050; }
.post-line.row-end { stroke: #964c00; }
.post { fill: #000084; }
.post.row-end { fill: #ff8200; }
.green { fill: none; stroke: #007c00; }
.bars { fill: #000084; font: 98px "Liberation Sans", Arial, sans-serif; }
.contour { fill: none; stroke: #7c7c7c; }
.labels { fill: #ff8200; font: 32px "Liberation Sans", Arial, sans-serif; }
.rose { fill: #a8a8a8; font: bold 11px "Liberation Sans", Arial, sans-serif; text-anchor: middle; }
.rose .topface { font-size: 6px; fill: #3c3e42; }
.wcs { font: 6px "Liberation Sans", Arial, sans-serif; fill: #bbb; }
.viewlabel { position: absolute; left: 2px; top: 3px; color: #d8d8d8; }
.vpctl { position: absolute; right: 5px; top: 5px; display: flex; gap: 4px; color: #eee; }
.tip { position: absolute; left: 525px; top: 191px; width: 65px; height: 15px; padding-left: 18px; line-height: 15px; background: #f0f0f0; color: #222; }

.palette { position: absolute; left: 623px; top: 91px; width: 168px; height: 95px; display: flex; background: #272e39; }
.dots { width: 4px; height: 14px; margin: 2px 1px 0 3px; background: repeating-linear-gradient(#272e39 0 1px, transparent 1px 2px), repeating-linear-gradient(90deg, #8b929e 0 1px, transparent 1px 2px); }
.pmain { flex: 1; background: #3b4453; padding: 2px 1px 1px; }
.phead { display: flex; align-items: center; gap: 4px; }
.phead .sel { width: 136px; height: 13px; }
.phead .sel::after { top: 6px; right: 2px; }
.phead svg { width: 9px; height: 9px; }
.palette table { width: 100%; height: 77px; border-collapse: collapse; table-layout: fixed; margin-top: 1px; }
.palette th, .palette td { font-weight: 400; text-align: left; padding: 0 2px; border-bottom: 1px solid #353d4b; white-space: nowrap; line-height: 8px; }
.palette th { width: 55px; }
.palette td { color: #eceef0; border-left: 1px solid #353d4b; }
.chip { display: inline-block; width: 5px; height: 5px; background: #ff8200; border: 1px solid #6b3d10; margin-right: 3px; }
.pside { width: 8px; padding-top: 2px; display: flex; flex-direction: column; align-items: center; gap: 2px; background: #2a313d; }
.pside svg { width: 4px; height: 4px; }

.cmd { position: absolute; left: 225px; bottom: 0; width: 478px; height: 39px; display: flex; color: #111; font-family: "DejaVu Sans Mono", "Liberation Mono", monospace; }
.cmdside { width: 12px; background: #262d38; color: #c9ccd2; display: flex; flex-direction: column; align-items: center; gap: 4px; padding-top: 2px; }
.cmdside svg { width: 5px; height: 5px; }
.cmdside .wrench { width: 8px; height: 8px; margin-top: 2px; }
.cmdmain { flex: 1; display: flex; flex-direction: column; background: rgb(203 203 203 / .69); white-space: nowrap; }
.cmdmain p { flex: 1; padding: 4px 1px 0; }
.entry { display: flex; align-items: center; gap: 3px; height: 11px; padding: 0 2px; border-top: 1px solid #555; background: rgb(255 255 255 / .35); }
.entry svg { width: 14px; height: 8px; }
.entry input { flex: 1; font-style: italic; }
.entry input::placeholder { color: #333; opacity: 1; }

/* bottom bars */
.layouts { display: flex; height: 11px; padding-left: 6px; color: #b2b7c0; }
.layouts a { padding: 0 6px; height: 10px; line-height: 10px; background: #2c3442; clip-path: polygon(0 0, 100% 0, calc(100% - 4px) 100%, 4px 100%); }
.layouts .on { background: #3b4453; color: #fff; font-weight: 700; }
.layouts button { font-size: 9px; width: 14px; height: 10px; background: #2c3442; border-radius: 4px; }
.status { display: flex; justify-content: flex-end; height: 14px; }
.tray { display: flex; align-items: center; height: 13px; width: 576px; padding: 0 1px 0 16px; margin-right: 1px; background: #37414f; color: #e6e8ec; white-space: nowrap; justify-content: space-between; }
.tray svg { width: 11px; height: 10px; }
.tray .hot { background: #5a90cc; height: 12px; }
.coords { min-width: 120px; text-align: right; }
.scale { color: #8f97a3; }
```
FILE: plan.js
```
const NS = "http://www.w3.org/2000/svg";
const icons = ["win", "search", "cortana", "tasks", "stack", "outlook", "chrome", "folder",
  "acad", "excel", "green", "green", "photo", "pdf", "note"];

document.querySelectorAll(".tasks").forEach((list) => {
  const end = list.parentElement.classList.contains("end");
  icons.forEach((name, i) => {
    const li = document.createElement("li");
    const running = end ? i >= 4 : (i >= 4 && i <= 6) || i >= 12;
    if (running) li.classList.add("run");
    if (name === "acad") li.classList.add("active");
    li.innerHTML = `<svg><use href="#t-${name}"/></svg>`;
    list.append(li);
  });
});

// Trellis posts: each vine row runs down the slope, four posts visible per row.
const origin = { x: 97.7, y: 330.8 };
const along = { x: 23.03, y: -3.24 };
const down = { x: 10.05, y: 72 };
const group = document.getElementById("posts");

function add(tag, attrs, cls) {
  const el = document.createElementNS(NS, tag);
  for (const key in attrs) el.setAttribute(key, attrs[key]);
  el.setAttribute("class", cls);
  group.append(el);
}
const at = (i, j) => ({
  x: origin.x + along.x * i + down.x * j,
  y: origin.y + along.y * i + down.y * j,
});
const firstPost = (i) => (i <= 22 ? 0 : i <= 28 ? 3 : 4);

for (let i = -4; i <= 30; i++) {
  const a = at(i, firstPost(i));
  const b = at(i, 5);
  add("line", { x1: a.x, y1: a.y, x2: b.x, y2: b.y }, "post-line" + (i % 5 === 0 ? " row-end" : ""));
}
for (let i = -4; i <= 30; i++) {
  for (let j = firstPost(i); j <= 4; j++) {
    const p = at(i, j);
    const marker = j === 0 && i % 5 === 0;
    add("circle", { cx: p.x, cy: p.y, r: marker ? 6.5 : 6 }, "post" + (marker ? " row-end" : ""));
  }
}
```
